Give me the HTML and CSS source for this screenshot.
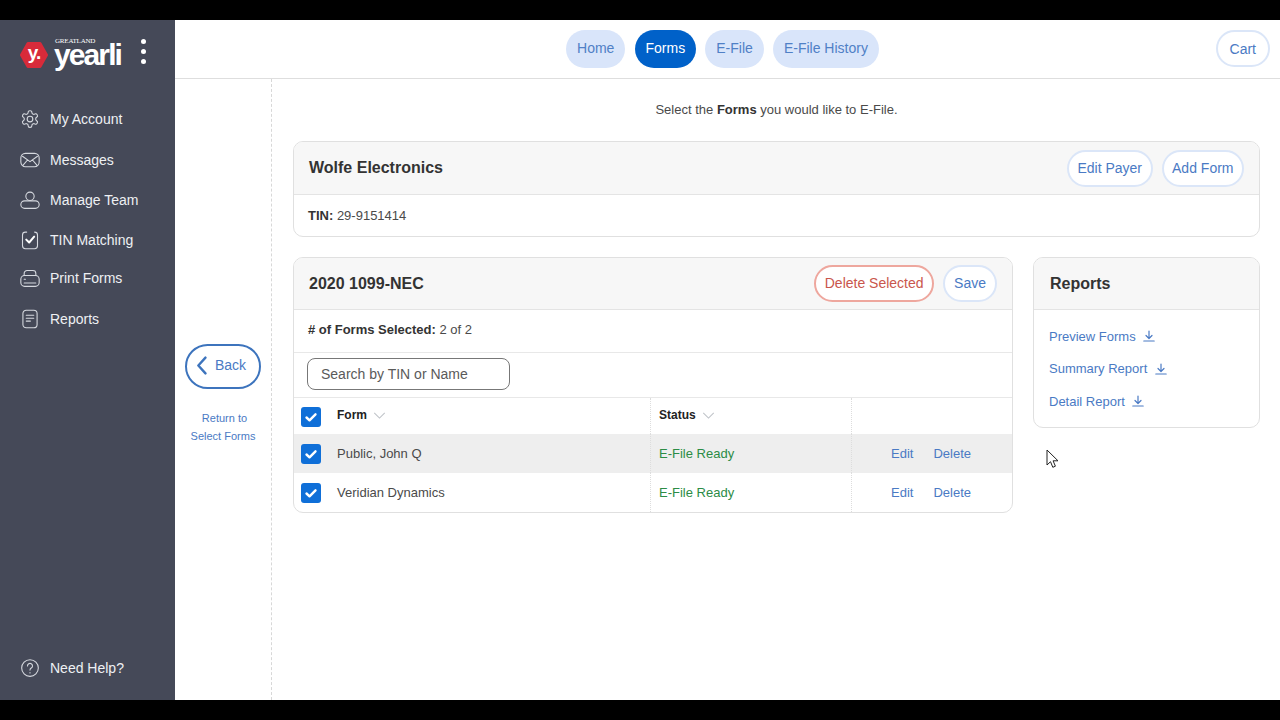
FILE: index.html
```html
<!DOCTYPE html>
<html lang="en">
<head>
<meta charset="utf-8">
<title>Yearli</title>
<link rel="stylesheet" href="styles.css">
</head>
<body>
<div class="app">
  <aside class="sidebar">
    <div class="brand">
      <div class="hexmark"><svg class="hex" viewBox="0 0 28 26"><path d="M8 1.500h12L26.500 13 20 24.500H8L1.500 13z"/></svg><span class="hex-y">y.</span></div>
      <div class="wordmark"><span class="gl">GREATLAND</span><span class="yl">yearli</span></div>
      <div class="dots"><i></i><i></i><i></i></div>
    </div>
    <nav class="side-nav">
      <a class="side-item item-a"><svg class="ic" viewBox="0 0 24 24"><path d="M12.22 2h-.44a2 2 0 0 0-2 2v.18a2 2 0 0 1-1 1.73l-.43.25a2 2 0 0 1-2 0l-.15-.08a2 2 0 0 0-2.73.73l-.22.38a2 2 0 0 0 .73 2.73l.15.1a2 2 0 0 1 1 1.72v.51a2 2 0 0 1-1 1.74l-.15.09a2 2 0 0 0-.73 2.73l.22.38a2 2 0 0 0 2.73.73l.15-.08a2 2 0 0 1 2 0l.43.25a2 2 0 0 1 1 1.73V20a2 2 0 0 0 2 2h.44a2 2 0 0 0 2-2v-.18a2 2 0 0 1 1-1.73l.43-.25a2 2 0 0 1 2 0l.15.08a2 2 0 0 0 2.73-.73l.22-.39a2 2 0 0 0-.73-2.73l-.15-.08a2 2 0 0 1-1-1.74v-.5a2 2 0 0 1 1-1.74l.15-.09a2 2 0 0 0 .73-2.73l-.22-.38a2 2 0 0 0-2.73-.73l-.15.08a2 2 0 0 1-2 0l-.43-.25a2 2 0 0 1-1-1.73V4a2 2 0 0 0-2-2z"/><circle cx="12" cy="12" r="3.400"/></svg>My Account</a>
      <a class="side-item"><svg class="ic" viewBox="0 0 24 24"><rect x="1" y="4" width="22" height="16" rx="5.500"/><path d="M3 7.500l9 6.500 9-6.500M3.500 18.500l5.500-6.500M20.500 18.500l-5.500-6.500"/></svg>Messages</a>
      <a class="side-item"><svg class="ic" viewBox="0 0 24 24"><circle cx="12" cy="7.500" r="5"/><rect x="1" y="13" width="22" height="9" rx="4.500"/></svg>Manage Team</a>
      <a class="side-item item-b"><svg class="ic" viewBox="0 0 24 24"><path d="M8 2.500H6.500A3.500 3.500 0 0 0 3 6v13a3.500 3.500 0 0 0 3.500 3.500h11A3.500 3.500 0 0 0 21 19V6a3.500 3.500 0 0 0-3.500-3.500"/><path class="ic-heavy" d="M7.500 11.500l3.500 3.500 6-7"/></svg>TIN Matching</a>
      <a class="side-item item-a"><svg class="ic" viewBox="0 0 24 24"><path d="M5 9V6.500A3.500 3.500 0 0 1 8.500 3h7A3.500 3.500 0 0 1 19 6.500V9"/><rect x="1" y="9" width="22" height="13" rx="4.500"/><path d="M5 18h14M5 13.500h1.500"/></svg>Print Forms</a>
      <a class="side-item"><svg class="ic" viewBox="0 0 24 24"><rect x="3.500" y="1.500" width="17" height="21" rx="4"/><path d="M7.500 7.500h9M7.500 11h9M7.500 14.500h5"/></svg>Reports</a>
    </nav>
    <a class="side-item help"><svg class="ic" viewBox="0 0 24 24"><circle cx="12" cy="12" r="10"/><path d="M9 9.500a3 3 0 1 1 4.500 2.600c-1 .6-1.500 1.200-1.500 2.400M12 17.500v.5"/></svg>Need Help?</a>
  </aside>

  <div class="main">
    <header class="topbar">
      <div class="pills">
        <a class="pill">Home</a>
        <a class="pill pill-active">Forms</a>
        <a class="pill">E-File</a>
        <a class="pill">E-File History</a>
      </div>
      <a class="btn cart">Cart</a>
    </header>

    <div class="body">
      <div class="backcol">
        <a class="back"><svg class="back-ic" viewBox="0 0 14 24"><path d="M12 2L3 12l9 10"/></svg>Back</a>
        <p class="back-note"><span class="note-first">Return to</span><br>Select Forms</p>
      </div>

      <div class="content">
        <p class="intro">Select the <b>Forms</b> you would like to E-File.</p>

        <section class="card">
          <div class="card-head">
            <h2>Wolfe Electronics</h2>
            <div class="btns"><a class="btn">Edit Payer</a><a class="btn">Add Form</a></div>
          </div>
          <div class="tin"><b>TIN:</b> 29-9151414</div>
        </section>

        <div class="columns">
          <section class="card forms">
            <div class="card-head">
              <h2>2020 1099-NEC</h2>
              <div class="btns"><a class="btn btn-danger">Delete Selected</a><a class="btn btn-save">Save</a></div>
            </div>
            <div class="selected"><b># of Forms Selected:</b> 2 of 2</div>
            <div class="search-row"><div class="search">Search by TIN or Name</div></div>
            <div class="row row-head">
              <div class="cell name"><span class="cb"><svg viewBox="0 0 20 20"><path d="M5.500 10.500l3 2.800 6-6"/></svg></span><b>Form</b><svg class="chev" viewBox="0 0 14 8"><path d="M1 1l6 6 6-6"/></svg></div>
              <div class="cell status"><b>Status</b><svg class="chev" viewBox="0 0 14 8"><path d="M1 1l6 6 6-6"/></svg></div>
              <div class="cell acts"></div>
            </div>
            <div class="row row-body row-hover">
              <div class="cell name"><span class="cb"><svg viewBox="0 0 20 20"><path d="M5.500 10.500l3 2.800 6-6"/></svg></span>Public, John Q</div>
              <div class="cell status ok">E-File Ready</div>
              <div class="cell acts"><a>Edit</a><a>Delete</a></div>
            </div>
            <div class="row row-body">
              <div class="cell name"><span class="cb"><svg viewBox="0 0 20 20"><path d="M5.500 10.500l3 2.800 6-6"/></svg></span>Veridian Dynamics</div>
              <div class="cell status ok">E-File Ready</div>
              <div class="cell acts"><a>Edit</a><a>Delete</a></div>
            </div>
          </section>

          <section class="card reports">
            <div class="card-head"><h2>Reports</h2></div>
            <ul class="report-list">
              <li><a>Preview Forms</a><svg class="dl" viewBox="0 0 12 12"><path d="M6 1v7M3 5.500L6 8.500l3-3M.8 11h10.400"/></svg></li>
              <li><a>Summary Report</a><svg class="dl" viewBox="0 0 12 12"><path d="M6 1v7M3 5.500L6 8.500l3-3M.8 11h10.400"/></svg></li>
              <li><a>Detail Report</a><svg class="dl" viewBox="0 0 12 12"><path d="M6 1v7M3 5.500L6 8.500l3-3M.8 11h10.400"/></svg></li>
            </ul>
          </section>
        </div>
      </div>
    </div>
  </div>

  <svg class="cursor" viewBox="0 0 13 20"><path d="M1 1v15l3.500-3.300 2.300 5.600 2.600-1.100-2.300-5.400H12z" fill="#fff" stroke="#222" stroke-width="1"/></svg>
</div>
</body>
</html>
```
FILE: styles.css
```css
* { box-sizing: border-box; }
html, body { margin: 0; height: 100%; }
body { background: #000; font-family: "Liberation Sans", Arial, sans-serif; font-size: 13px; color: #4a4a4a; overflow: hidden; }
a { color: inherit; text-decoration: none; }
.app { position: relative; display: flex; height: 680px; margin: 20px 0; background: #fff; }

.sidebar { width: 175px; flex: none; display: flex; flex-direction: column; background: #454958; color: #eef0f3; }
.brand { display: flex; align-items: center; height: 59px; padding: 7px 0 0 20px; }
.hexmark { position: relative; width: 28px; height: 26px; flex: none; margin-top: 3px; }
.hex { display: block; width: 28px; height: 26px; fill: #d82b3a; stroke: #d82b3a; stroke-width: 3; stroke-linejoin: round; }
.hex-y { position: absolute; inset: 0; text-align: center; color: #fff; font-weight: 700; font-size: 19px; line-height: 22px; letter-spacing: -1px; }
.wordmark { display: flex; flex-direction: column; width: 66px; margin-left: 6px; color: #fff; }
.gl { height: 6px; padding-left: 1px; font-family: "Liberation Serif", serif; font-size: 7px; line-height: 6px; letter-spacing: -.2px; }
.yl { height: 24px; font-weight: 700; font-size: 30px; line-height: 22px; letter-spacing: -1.900px; }
.dots { display: flex; flex-direction: column; gap: 5px; margin-left: 21px; margin-top: -3px; }
.dots i { display: block; width: 5px; height: 5px; border-radius: 50%; background: #fff; }
.side-nav { display: flex; flex-direction: column; padding-top: 20px; }
.side-item { display: flex; align-items: center; gap: 10px; height: 40px; padding-left: 20px; font-size: 14px; }
.item-a { margin-bottom: 1px; }
.item-b { margin-bottom: -2px; }
.help { margin-top: auto; margin-bottom: 12px; }
.ic { width: 20px; height: 20px; flex: none; fill: none; stroke: #d6d9df; stroke-width: 1.300; stroke-linecap: round; stroke-linejoin: round; }
.ic-heavy { stroke: #fff; stroke-width: 2.400; }

.main { flex: 1; display: flex; flex-direction: column; min-width: 0; }
.topbar { display: grid; grid-template-columns: 1fr auto 1fr; align-items: center; height: 59px; padding: 0 10px 1px 0; border-bottom: 1px solid #dedede; font-size: 14px; }
.pills { grid-column: 2; display: flex; gap: 9.500px; }
.pill { display: flex; align-items: center; height: 38px; padding: 0 10.800px 1px; border-radius: 19px; background: #d9e5fa; color: #5080c6; }
.pill-active { background: #0061c9; color: #fff; }
.btn { display: flex; align-items: center; height: 37px; padding: 0 8.500px; border: 2px solid #dbe6f8; border-radius: 19px; background: #fff; color: #4a7ac4; font-size: 14px; }
.cart { grid-column: 3; justify-self: end; padding: 0 12px; }

.body { flex: 1; display: flex; min-height: 0; }
.backcol { width: 97px; flex: none; display: flex; flex-direction: column; align-items: center; justify-content: center; padding: 10px 0 0 0; border-right: 1px dashed #d8d8d8; }
.back { display: flex; align-items: center; gap: 7px; width: 76px; height: 45px; padding: 0 0 3px 8px; border: 2px solid #3d74bd; border-radius: 23px; color: #4a7ac4; font-size: 14px; }
.back-ic { width: 13px; height: 19px; fill: none; stroke: #3d74bd; stroke-width: 3; stroke-linecap: round; stroke-linejoin: round; }
.back-note { margin: 20px 0 0; font-size: 11px; line-height: 18px; text-align: center; color: #4a7ac4; }
.note-first { margin-left: 3px; }

.content { flex: 1; min-width: 0; padding: 0 20px 0 21px; }
.intro { margin: 0; height: 62px; line-height: 62px; text-align: center; }
.intro b { color: #333; }
.card { border: 1px solid #e0e0e0; border-radius: 10px; background: #fff; overflow: hidden; }
.card-head { display: flex; align-items: center; justify-content: space-between; height: 53px; padding: 0 15px; background: #f7f7f7; border-bottom: 1px solid #e4e4e4; }
.card-head h2 { margin: 0; font-size: 16px; font-weight: 700; color: #333; }
.btns { display: flex; gap: 9px; }
.btn-danger { border-color: #eea79e; color: #c9564c; }
.btn-save { padding: 0 9px; }
.tin { height: 41px; line-height: 41px; padding-left: 14px; font-size: 13px; }
.tin b, .selected b { color: #333; }
.columns { display: flex; align-items: flex-start; gap: 20px; margin-top: 20px; }
.columns .card-head { height: 52px; }
.columns .btn { padding-bottom: 1px; }
.forms { width: 720px; flex: none; }
.reports { flex: 1; }
.reports .card-head { padding-left: 16px; }
.selected { height: 43px; line-height: 40px; padding-left: 14px; border-bottom: 1px solid #e8e8e8; }
.search-row { display: flex; align-items: center; height: 45px; padding: 0 0 2px 13px; border-bottom: 1px solid #e8e8e8; }
.search { display: flex; align-items: center; width: 203px; height: 32px; padding-left: 13px; border: 1px solid #777; border-radius: 8px; color: #5a5a5a; font-size: 14px; }
.row { display: grid; grid-template-columns: 356px 201px 1fr; }
.row-head { height: 36px; font-size: 12px; }
.row-head .cell { padding-bottom: 2px; }
.row-head b { color: #222; }
.row-head .cb { margin-top: 4px; }
.row-body { height: 39px; }
.row-hover { background: #eeeeee; }
.cell { display: flex; align-items: center; }
.name { padding-left: 7px; }
.status { padding-left: 8px; border-left: 1px dotted #ddd; }
.acts { border-left: 1px dotted #ddd; padding-left: 39px; gap: 20px; color: #4a7ac4; }
.ok { color: #2c8c45; }
.cb { flex: none; width: 20px; height: 20px; margin-right: 16px; border-radius: 3px; background: #0f6fd8; }
.cb svg { display: block; width: 20px; height: 20px; fill: none; stroke: #fff; stroke-width: 2.400; stroke-linecap: round; stroke-linejoin: round; }
.chev { width: 13px; height: 7px; margin-left: 6px; fill: none; stroke: #bfc3c8; stroke-width: 1.200; }
.report-list { list-style: none; margin: 0; padding: 9.800px 0 10.200px 15px; color: #4a7ac4; }
.report-list li { display: flex; align-items: center; gap: 7.500px; height: 32.500px; }
.dl { width: 12px; height: 12px; fill: none; stroke: #4a7ac4; stroke-width: 1.200; stroke-linecap: round; stroke-linejoin: round; }
.cursor { position: absolute; left: 1046px; top: 429px; width: 13px; height: 20px; }
```
